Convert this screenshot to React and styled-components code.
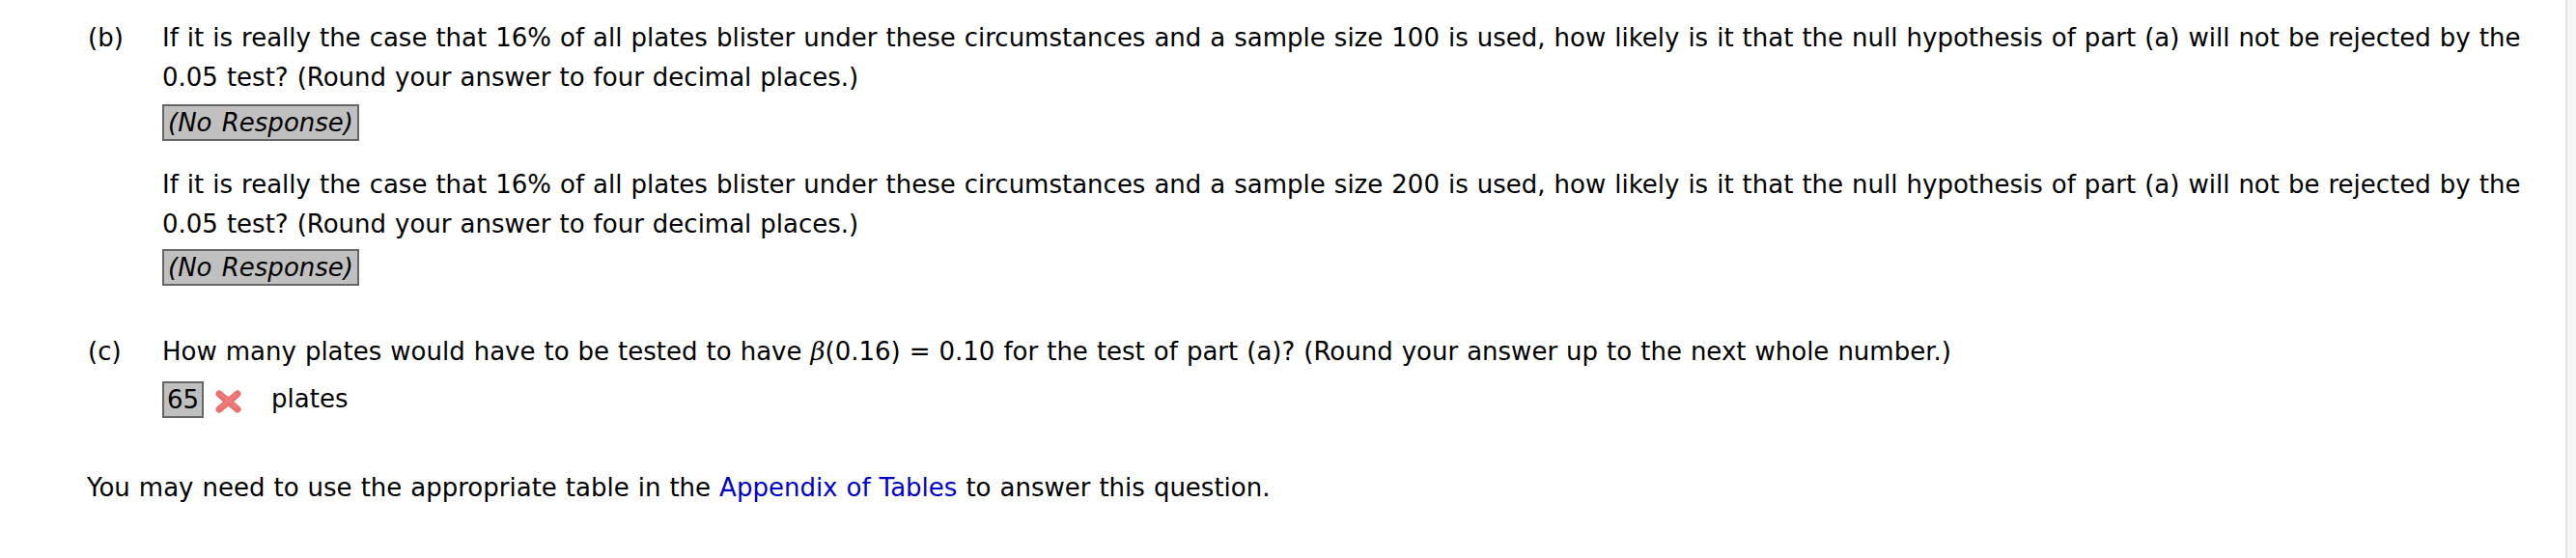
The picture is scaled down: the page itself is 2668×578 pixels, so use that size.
import React from "react";
import styled, { createGlobalStyle } from "styled-components";

const GlobalStyle = createGlobalStyle`
  html, body {
    margin: 0;
    padding: 0;
    background: #ffffff;
  }

  body {
    font-family: Verdana, "DejaVu Sans", sans-serif;
    font-size: 26px;
    line-height: 41px;
    word-spacing: 0.75px;
    color: #000000;
  }
`;

const Page = styled.div`
  display: flex;
  width: 2668px;
  height: 578px;
  overflow: hidden;
`;

const Main = styled.div`
  flex: 1;
  padding: 19px 17px 0 90px;
`;

const ScrollTrack = styled.div`
  width: 9px;
  background: #f5f5f5;
  border-left: 2px solid #e1e1e1;
`;

const Part = styled.div`
  display: grid;
  grid-template-columns: 78px 1fr;
  margin-bottom: ${(p) => p.$after || 0}px;
`;

const Label = styled.div`
  padding-left: 1px;
`;

const Body = styled.div`
  display: flex;
  flex-direction: column;
  align-items: flex-start;
`;

const Question = styled.p`
  margin: ${(p) => p.$top || 0}px 0 0 0;
  padding: 0;
`;

const Beta = styled.i`
  font-family: "DejaVu Serif", serif;
`;

const AnswerRow = styled.div`
  display: flex;
  align-items: center;
  margin-top: ${(p) => p.$top || 0}px;
`;

const AnswerBox = styled.span`
  display: inline-block;
  background: #c0c0c0;
  border: 2px solid #666666;
  padding: 0 ${(p) => p.$pad || 3}px;
  line-height: 34px;
  word-spacing: 2px;
  font-style: ${(p) => (p.$empty ? "italic" : "normal")};
`;

const WrongMark = styled.svg`
  width: 29px;
  height: 26px;
  margin: 4px 30px 0 11px;
`;

const Unit = styled.span``;

const Note = styled.p`
  margin: 0;
`;

const Link = styled.a`
  color: #0000cc;
  text-decoration: none;
`;

function Cross() {
  return (
    <WrongMark viewBox="0 0 29 26">
      <g stroke="#e8605e" strokeWidth="7" strokeLinecap="round" opacity="0.9">
        <line x1="5" y1="5" x2="24" y2="21" />
        <line x1="24" y1="5" x2="5" y2="21" />
      </g>
      <g stroke="#f08a88" strokeWidth="2" strokeLinecap="round" opacity="0.6">
        <line x1="6" y1="5" x2="23" y2="19" />
        <line x1="23" y1="5" x2="6" y2="19" />
      </g>
    </WrongMark>
  );
}

const question =
  "If it is really the case that 16% of all plates blister under these circumstances and a sample size";
const questionEnd =
  "is used, how likely is it that the null hypothesis of part (a) will not be rejected by the 0.05 test? (Round your answer to four decimal places.)";

export default function App() {
  return (
    <>
      <GlobalStyle />
      <Page>
        <Main>
          <Part $after={48}>
            <Label>(b)</Label>
            <Body>
              <Question>
                {question} 100 {questionEnd}
              </Question>
              <AnswerRow $top={7}>
                <AnswerBox $empty $pad={4}>(No Response)</AnswerBox>
              </AnswerRow>
              <Question $top={25}>
                {question} 200 {questionEnd}
              </Question>
              <AnswerRow $top={5}>
                <AnswerBox $empty $pad={4}>(No Response)</AnswerBox>
              </AnswerRow>
            </Body>
          </Part>

          <Part $after={51}>
            <Label>(c)</Label>
            <Body>
              <Question>
                How many plates would have to be tested to have <Beta>β</Beta>
                (0.16) = 0.10 for the test of part (a)? (Round your answer up
                to the next whole number.)
              </Question>
              <AnswerRow $top={8}>
                <AnswerBox $pad={3}>65</AnswerBox>
                <Cross />
                <Unit>plates</Unit>
              </AnswerRow>
            </Body>
          </Part>

          <Note>
            You may need to use the appropriate table in the{" "}
            <Link href="#">Appendix of Tables</Link> to answer this question.
          </Note>
        </Main>
        <ScrollTrack />
      </Page>
    </>
  );
}
